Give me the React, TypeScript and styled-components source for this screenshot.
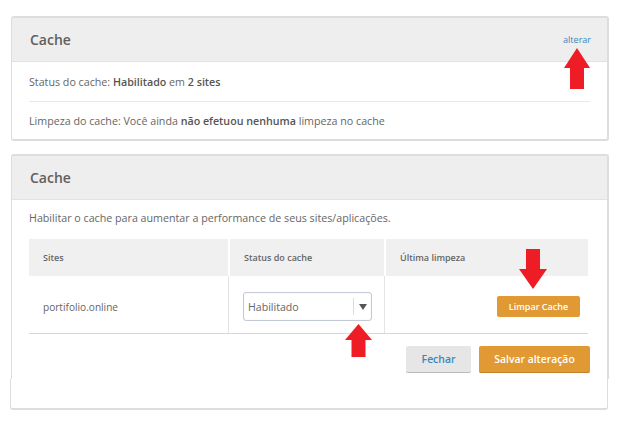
import React from 'react';
import styled, { createGlobalStyle } from 'styled-components';

const GlobalStyle = createGlobalStyle`
  * {
    box-sizing: border-box;
  }

  html, body {
    margin: 0;
    background: #fff;
    font-family: 'Open Sans', sans-serif;
    color: #666;
  }
`;

const Page = styled.div`
  position: relative;
  width: 631px;
  height: 437px;
  padding: 16px 0 0 11px;
  overflow: hidden;
`;

const Panel = styled.section`
  width: 598px;
  border: 1px solid #ddd;
  border-width: 2px 2px 2px 1px;
  border-radius: 3px;
  margin-bottom: 13px;
`;

const OpenPanel = styled(Panel)`
  height: 225px;
  border-bottom: 0;
  border-radius: 3px 3px 0 0;
  margin-bottom: 0;
`;

const PanelEnd = styled.div`
  width: 598px;
  height: 31px;
  margin-left: -1px;
  border: 1px solid #ddd;
  border-width: 0 1px 2px 1px;
  border-radius: 0 0 3px 3px;
`;

const PanelHead = styled.header`
  display: flex;
  align-items: center;
  justify-content: space-between;
  height: 44px;
  padding: 0 16px 0 18px;
  background: #eee;
  border-bottom: 1px solid #e2e2e2;
`;

const PanelTitle = styled.h2`
  margin: 0;
  font-size: 14px;
  font-weight: 600;
  color: #5f5f5f;
`;

const EditLink = styled.a`
  font-size: 9px;
  color: #3a87bd;
`;

const PanelBody = styled.div`
  padding: 0 17px;
  font-size: 10.7px;
`;

const InfoRow = styled.p<{ $divided?: boolean }>`
  margin: 0;
  height: ${(p) => (p.$divided ? 40 : 37)}px;
  display: flex;
  align-items: center;
  white-space: pre;
  border-bottom: ${(p) => (p.$divided ? '1px solid #e8e8e8' : '0')};

  b {
    font-weight: 600;
    color: #555;
  }
`;

const Intro = styled.p`
  margin: 0;
  height: 36px;
  display: flex;
  align-items: center;
`;

const CacheTable = styled.div`
  width: 559px;
  margin-top: 3px;
  display: grid;
  grid-template-columns: 201px 156px 202px;
  grid-template-rows: 37px 57px;
  border-bottom: 1px solid #d8d8dc;
`;

const HeadCell = styled.div<{ $last?: boolean }>`
  display: flex;
  align-items: center;
  padding-left: 14px;
  background: #f0f0f0;
  border-right: ${(p) => (p.$last ? '0' : '2px solid #fff')};
  font-size: 9px;
  font-weight: 600;
  color: #666;
`;

const Cell = styled.div<{ $end?: boolean }>`
  display: flex;
  align-items: center;
  justify-content: ${(p) => (p.$end ? 'flex-end' : 'flex-start')};
  padding: ${(p) => (p.$end ? '4px 8px 0 0' : '4px 0 0 14px')};
  margin-right: ${(p) => (p.$end ? 0 : 1)}px;
  border-right: ${(p) => (p.$end ? '0' : '1px solid #e4e4e4')};
  font-size: 10.1px;
`;

const StatusCell = styled(Cell)`
  padding-left: 13px;
`;

const SelectBox = styled.div`
  display: flex;
  align-items: center;
  width: 129px;
  height: 29px;
  border: 1px solid #c3c9d6;
  border-radius: 3px;
  padding-left: 4px;
  font-size: 10.6px;
  box-shadow: inset 0 0 1px #d5d9e2;
`;

const SelectLabel = styled.span`
  flex: 1;
`;

const SelectCaret = styled.span`
  display: flex;
  align-items: center;
  justify-content: center;
  width: 18px;
  height: 17px;
  border-left: 1px solid #ddd;

  &::after {
    content: '';
    border: 4px solid transparent;
    border-top: 6px solid #555;
    border-bottom: 0;
  }
`;

const ClearButton = styled.button`
  width: 83px;
  height: 21px;
  padding: 0;
  border: 0;
  border-radius: 2px;
  background: #e09933;
  color: #fff;
  font: 600 9px 'Open Sans', sans-serif;
`;

const Actions = styled.div`
  display: flex;
  justify-content: flex-end;
  gap: 8px;
  width: 561px;
  margin-top: 12px;
`;

const ActionButton = styled.button<{ $primary?: boolean }>`
  height: 27px;
  padding: 0;
  width: ${(p) => (p.$primary ? 111 : 65)}px;
  border: 0;
  border-bottom: 1px solid ${(p) => (p.$primary ? '#c0812a' : '#bbb')};
  border-radius: 2px;
  background: ${(p) => (p.$primary ? '#e09933' : '#e6e6e6')};
  color: ${(p) => (p.$primary ? '#fff' : '#3a87bd')};
  font: 600 10.4px 'Open Sans', sans-serif;
`;

const Arrow = styled.svg<{ $x: number; $y: number; $down?: boolean }>`
  position: absolute;
  left: ${(p) => p.$x}px;
  top: ${(p) => p.$y}px;
  transform: ${(p) => (p.$down ? 'rotate(180deg)' : 'none')};
`;

interface IArrow {
  x: number;
  y: number;
  w: number;
  h: number;
  head: number;
  down?: boolean;
}

const RedArrow: React.FC<IArrow> = ({ x, y, w, h, head, down }) => {
  const inset = (w - 14) / 2;
  return (
    <Arrow $x={x} $y={y} $down={down} width={w} height={h} viewBox={`0 0 ${w} ${h}`}>
      <path
        d={`M${w / 2} 0 L${w} ${head} H${w - inset} V${h} H${inset} V${head} H0 Z`}
        fill="#ee1c25"
      />
    </Arrow>
  );
};

const App: React.FC = () => (
  <Page>
    <GlobalStyle />
    <Panel>
      <PanelHead>
        <PanelTitle>Cache</PanelTitle>
        <EditLink>alterar</EditLink>
      </PanelHead>
      <PanelBody>
        <InfoRow $divided>
          Status do cache: <b>Habilitado</b> em <b>2 sites</b>
        </InfoRow>
        <InfoRow>
          Limpeza do cache: Você ainda <b>não efetuou nenhuma</b> limpeza no cache
        </InfoRow>
      </PanelBody>
    </Panel>
    <OpenPanel>
      <PanelHead>
        <PanelTitle>Cache</PanelTitle>
      </PanelHead>
      <PanelBody>
        <Intro>Habilitar o cache para aumentar a performance de seus sites/aplicações.</Intro>
        <CacheTable>
          <HeadCell>Sites</HeadCell>
          <HeadCell>Status do cache</HeadCell>
          <HeadCell $last>Última limpeza</HeadCell>
          <Cell>portifolio.online</Cell>
          <StatusCell>
            <SelectBox>
              <SelectLabel>Habilitado</SelectLabel>
              <SelectCaret />
            </SelectBox>
          </StatusCell>
          <Cell $end>
            <ClearButton>Limpar Cache</ClearButton>
          </Cell>
        </CacheTable>
        <Actions>
          <ActionButton>Fechar</ActionButton>
          <ActionButton $primary>Salvar alteração</ActionButton>
        </Actions>
      </PanelBody>
    </OpenPanel>
    <PanelEnd />
    <RedArrow x={564} y={48} w={26} h={41} head={20} />
    <RedArrow x={345} y={324} w={27} h={33} head={16} />
    <RedArrow x={519} y={249} w={28} h={40} head={20} down />
  </Page>
);

export default App;
